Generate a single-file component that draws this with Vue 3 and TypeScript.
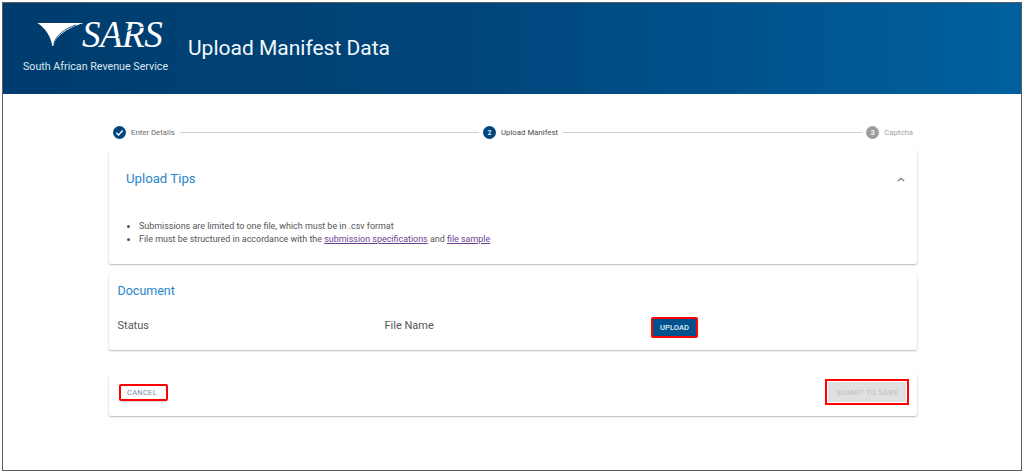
<script setup lang="ts">
const tips = 'Submissions are limited to one file, which must be in .csv format'
</script>

<template>
  <div class="frame">
    <header class="hero">
      <div class="brand">
        <div class="logo">
          <svg class="wing" viewBox="0 0 48 26" width="47" height="25" aria-hidden="true">
            <path d="M0 1 L48 1 C37 4 27 10 22 15 C19 18 17.500 21 16.500 25 L15.500 25 C14.500 19 12 13 8 8 C6 6 3 3 0 1 Z" fill="#fff" />
            <path d="M17 23 C19 14 28 7 40 3" fill="none" stroke="#0b4a7c" stroke-width="0.900" />
          </svg>
          <span class="wordmark">SARS</span>
          <svg class="swoosh" viewBox="0 0 30 14" width="30" height="14" aria-hidden="true">
            <path d="M1 13 C8 6 18 2 29 2" fill="none" stroke="#00437a" stroke-width="1.200" />
          </svg>
        </div>
        <div class="tagline">South African Revenue Service</div>
      </div>
      <h1 class="title">Upload Manifest Data</h1>
    </header>

    <main class="content">
      <div class="stepper">
        <div class="step">
          <span class="dot">
            <svg viewBox="0 0 24 24" width="11" height="11"><path d="M5 12.500 L10 17.500 L19 7.500" fill="none" stroke="#fff" stroke-width="3" /></svg>
          </span>
          <span class="step-label">Enter Details</span>
        </div>
        <span class="line"></span>
        <div class="step">
          <span class="dot">2</span>
          <span class="step-label dark">Upload Manifest</span>
        </div>
        <span class="line"></span>
        <div class="step">
          <span class="dot off">3</span>
          <span class="step-label muted">Captcha</span>
        </div>
      </div>

      <section class="card tips">
        <div class="tips-head">
          <h2 class="tips-title">Upload Tips</h2>
          <svg class="chev" viewBox="0 0 10 6" width="8" height="5"><path d="M1 5 L5 1.500 L9 5" fill="none" stroke="#6d6d6d" stroke-width="1.400" /></svg>
        </div>
        <ul class="tip-list">
          <li>{{ tips }}</li>
          <li>File must be structured in accordance with the <a href="#">submission specifications</a> and <a href="#">file sample</a></li>
        </ul>
      </section>

      <section class="card doc">
        <h2 class="doc-title">Document</h2>
        <div class="doc-row">
          <span>Status</span>
          <span>File Name</span>
          <div class="upload-cell"><button class="btn primary">UPLOAD</button></div>
        </div>
      </section>

      <section class="card actions">
        <button class="btn cancel">CANCEL</button>
        <button class="btn submit" disabled>SUBMIT TO SARS</button>
      </section>
    </main>
  </div>
</template>

<style>
html, body { margin: 0; background: #fff; }
</style>

<style scoped>
.frame {
  box-sizing: border-box;
  width: 1020px;
  height: 469px;
  margin: 2px 0 0 2px;
  border: 1px solid #5c5c5c;
  font-family: Roboto, "Liberation Sans", sans-serif;
  background: #fff;
  overflow: hidden;
}
.hero {
  height: 91px;
  display: flex;
  align-items: flex-start;
  background: linear-gradient(90deg, #003c6d 0%, #00457a 45%, #00609f 100%);
  color: #fff;
}
.brand {
  width: 185px;
  flex: none;
  padding: 16px 0 0 20px;
  box-sizing: border-box;
}
.logo {
  position: relative;
  display: flex;
  align-items: flex-start;
  height: 32px;
  margin-left: 14px;
}
.wing { margin-top: 3px; flex: none; }
.wordmark {
  font-family: "Liberation Serif", serif;
  font-style: italic;
  font-size: 37px;
  line-height: 32px;
  letter-spacing: -0.500px;
  margin-left: -2px;
}
.swoosh {
  position: absolute;
  left: 80px;
  top: 6px;
}
.tagline {
  margin-top: 9px;
  font-size: 10.700px;
  line-height: 14px;
  color: #dbe6ef;
  white-space: nowrap;
}
.title {
  margin: 31px 0 0 0;
  font-size: 21px;
  font-weight: 400;
  line-height: 28px;
  color: #f2f7fb;
}
.content {
  width: 808px;
  margin-left: 106px;
  padding-top: 31px;
}
.stepper {
  display: flex;
  align-items: center;
  height: 15px;
  padding: 0 4px;
  margin-bottom: 10px;
}
.step { display: flex; align-items: center; flex: none; }
.dot {
  width: 13px;
  height: 13px;
  border-radius: 50%;
  background: #00477f;
  color: #fff;
  font-size: 7px;
  font-weight: 500;
  display: flex;
  align-items: center;
  justify-content: center;
}
.dot.off { background: #9e9e9e; }
.step-label {
  margin-left: 5px;
  font-size: 7.800px;
  color: #6b6b6b;
  white-space: nowrap;
}
.step-label.dark { color: #4a4a4a; }
.step-label.muted { color: #a3a3a3; }
.line {
  flex: 1;
  height: 1px;
  background: #cfcfcf;
  margin: 0 4px 0 5px;
}
.card {
  background: #fff;
  border-radius: 2px;
  box-shadow: 0 1px 2px rgba(0, 0, 0, 0.28), 0 0 1px rgba(0, 0, 0, 0.05);
}
.tips { height: 114px; padding: 0 12px 0 17px; box-sizing: border-box; }
.tips-head {
  height: 57px;
  display: flex;
  align-items: center;
  justify-content: space-between;
}
.tips-title {
  margin: 0;
  font-size: 13.200px;
  font-weight: 400;
  color: #2a86c9;
}
.chev { margin-top: 2px; }
.tip-list {
  margin: 13px 0 0 0;
  padding: 0 0 0 13px;
  font-size: 8.930px;
  line-height: 13.300px;
  color: #555;
}
.tip-list a { color: #6a3f92; }
.doc {
  height: 77px;
  margin-top: 9px;
  padding: 10px 9px 0 8.500px;
  box-sizing: border-box;
}
.doc-title {
  margin: 0;
  font-size: 12.500px;
  line-height: 15px;
  font-weight: 400;
  color: #2a86c9;
}
.doc-row {
  display: grid;
  grid-template-columns: 267px 267px 1fr;
  align-items: center;
  margin-top: 15px;
  font-size: 11px;
  color: #555;
}
.upload-cell { display: flex; margin-top: 5px; }
.btn {
  font-family: inherit;
  font-size: 7.600px;
  font-weight: 500;
  padding: 0;
  border-radius: 1px;
  box-sizing: border-box;
  outline: 2px solid #f00;
  outline-offset: -1px;
}
.primary {
  width: 45px;
  height: 19px;
  margin-left: 0.500px;
  background: #00518c;
  color: #e8f0f6;
  border: 0;
}
.actions {
  height: 42px;
  margin-top: 24px;
  padding: 0 10px 6px 11px;
  box-sizing: border-box;
  display: flex;
  align-items: center;
  justify-content: space-between;
}
.cancel {
  width: 47px;
  height: 15px;
  padding-right: 3px;
  background: #fff;
  color: #7690a8;
  font-weight: 400;
  letter-spacing: 0.200px;
  border: 0;
  box-shadow: 0 2px 2px rgba(0, 60, 110, 0.2);
}
.submit {
  width: 80px;
  height: 22px;
  font-size: 7.400px;
  font-weight: 400;
  letter-spacing: 0.300px;
  background: #e0e0e0;
  color: #bdbdbd;
  border: 1px solid #fff;
  outline-offset: 0;
  border-radius: 0;
}
</style>
